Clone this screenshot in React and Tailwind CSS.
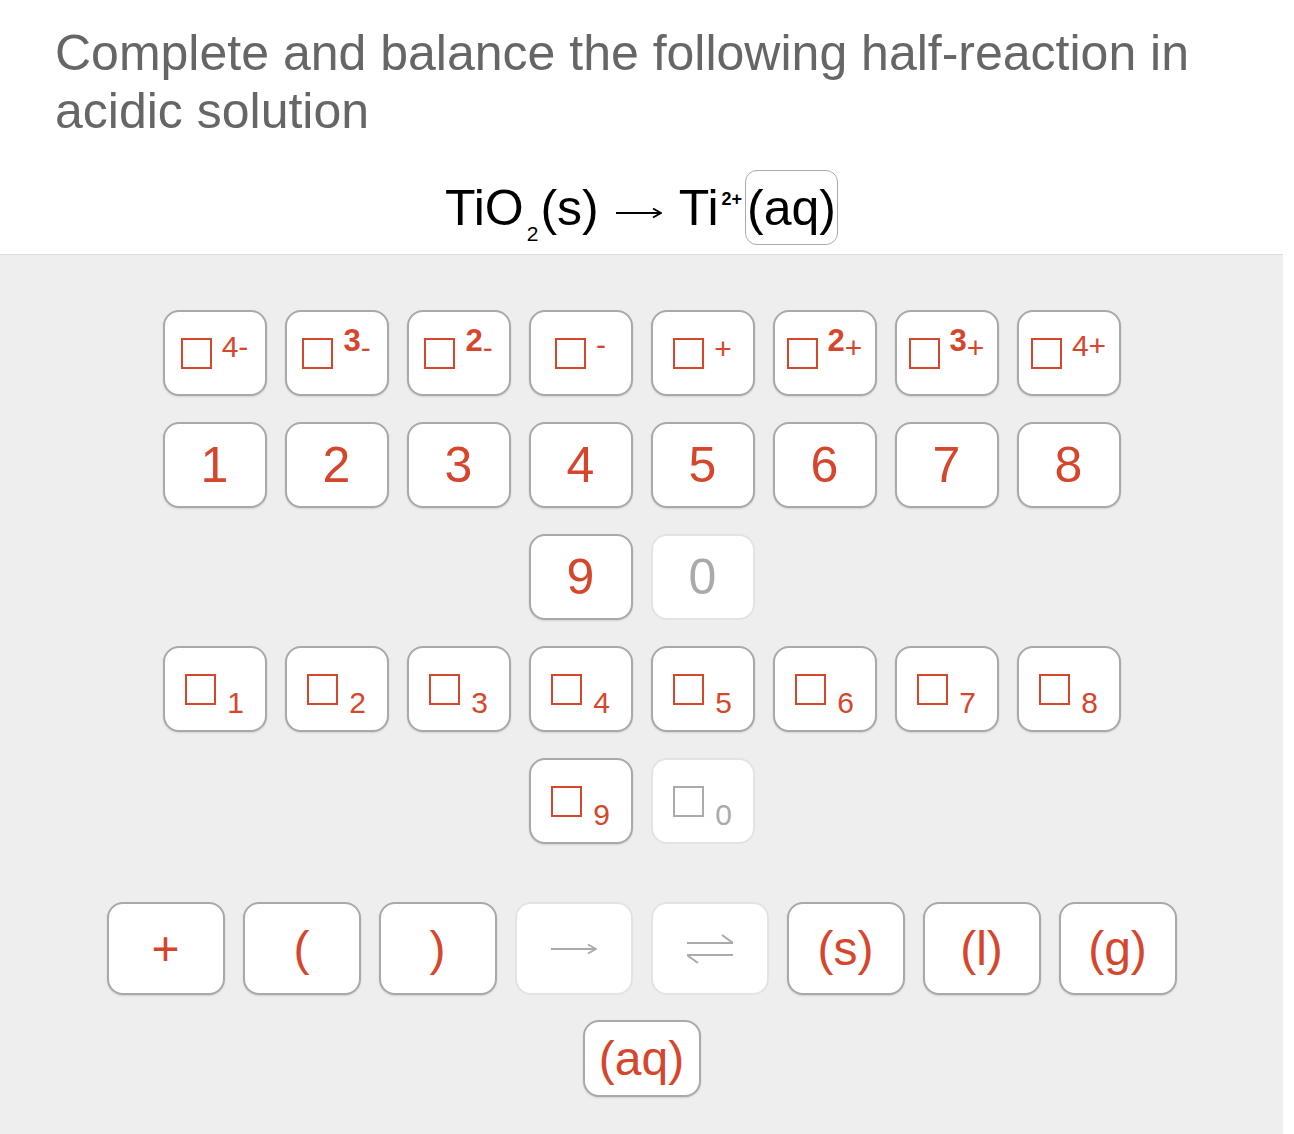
import React from 'react';

const FONT = "font-['Liberation_Sans',Arial,sans-serif]";

function Arrow({ color = '#000', w = 46 }) {
  return (
    <svg width={w} height="16" viewBox="0 0 46 16" fill="none">
      <path d="M0 8H44M37 3.5L45 8L37 12.5" stroke={color} strokeWidth="2" />
    </svg>
  );
}

function Harpoons() {
  return (
    <svg width="46" height="30" viewBox="0 0 46 30" fill="none">
      <path d="M0 9H46L35 1" stroke="#aaaaaa" strokeWidth="2" />
      <path d="M46 21H0L11 29" stroke="#aaaaaa" strokeWidth="2" />
    </svg>
  );
}

function Box({ disabled }) {
  return (
    <span className={disabled ? 'block w-[31px] h-[31px] border-2 border-[#aaaaaa]' : 'block w-[31px] h-[31px] border-2 border-[#d5472d]'} />
  );
}

function Key({ children, disabled, className = '' }) {
  const base = 'flex items-center justify-center bg-white rounded-[16px] ' + className;
  const tone = disabled
    ? ' border-2 border-[#e3e3e3] text-[#aaaaaa]'
    : ' border-2 border-[#a9a9a9] text-[#d5472d] shadow-[0_1px_2px_rgba(0,0,0,0.12)]';
  return <button className={base + tone}>{children}</button>;
}

// superscript charge keys
const CHARGES = [
  { bold: null, text: '4-', mt: 'mt-[-6px]' },
  { bold: '3', text: '-', mt: 'mt-[-13px]' },
  { bold: '2', text: '-', mt: 'mt-[-13px]' },
  { bold: null, text: '-', mt: 'mt-[-8px]' },
  { bold: null, text: '+', mt: 'mt-[-4px]' },
  { bold: '2', text: '+', mt: 'mt-[-13px]' },
  { bold: '3', text: '+', mt: 'mt-[-13px]' },
  { bold: null, text: '4+', mt: 'mt-[-7px]' },
];

function ChargeKey({ c }) {
  return (
    <Key className="h-[86px]">
      <span className="flex items-start h-[31px] gap-[10px]">
        <Box />
        <span className={'flex items-baseline leading-none text-[30px] ' + c.mt}>
          {c.bold && <span className="font-bold text-[31px]">{c.bold}</span>}
          <span className={c.bold ? 'relative top-[7px]' : ''}>{c.text}</span>
        </span>
      </span>
    </Key>
  );
}

function SubKey({ n, disabled, className = '' }) {
  return (
    <Key disabled={disabled} className={'h-[86px] ' + className}>
      <span className="flex items-start h-[31px] gap-[11px]">
        <Box disabled={disabled} />
        <span className="leading-none text-[30px] mt-[14px]">{n}</span>
      </span>
    </Key>
  );
}

export default function App() {
  return (
    <div className={'w-[1283px] min-h-[1134px] bg-[#eeeeee] ' + FONT}>
      {/* Header */}
      <header className="bg-white border-b border-[#dddddd] pt-[25px] pb-[9px]">
        <h1 className="px-[55px] text-[50px] leading-[57.5px] text-[#666666]">
          Complete and balance the following half-reaction in acidic solution
        </h1>
        <div className="mt-[30px] flex justify-center items-baseline text-[50px] leading-none text-black">
          <span>TiO</span>
          <span className="relative top-[16px] text-[21px] ml-[3px] mr-[2px]">2</span>
          <span>(s)</span>
          <span className="mx-[17px] relative top-[-4px] inline-block"><Arrow /></span>
          <span>Ti</span>
          <span className="relative top-[-20px] text-[18px] font-bold ml-[3px] mr-[3px]">2+</span>
          <span className="inline-flex h-[75px] pt-[12px] px-[1px] border-[1.5px] border-[#aaaaaa] rounded-[12px]">(aq)</span>
        </div>
      </header>

      {/* Keypad */}
      <div className="pt-[55px] flex justify-center">
        <div className="grid grid-cols-[repeat(8,104px)] gap-x-[18px] gap-y-[26px]">
          {CHARGES.map((c, i) => <ChargeKey key={i} c={c} />)}
          {[1, 2, 3, 4, 5, 6, 7, 8].map(n => (
            <Key key={n} className="h-[86px] text-[50px] leading-none">{n}</Key>
          ))}
          <Key className="h-[86px] text-[50px] leading-none col-start-4">9</Key>
          <Key disabled className="h-[86px] text-[50px] leading-none">0</Key>
          {[1, 2, 3, 4, 5, 6, 7, 8].map(n => (
            <SubKey key={n} n={n} className={n === 1 ? 'col-start-1' : ''} />
          ))}
          <SubKey n={9} className="col-start-4" />
          <SubKey n={0} disabled />
        </div>
      </div>

      {/* Symbols */}
      <div className="mt-[58px] flex justify-center gap-[18px]">
        <Key className="w-[118px] h-[93px] text-[48px] leading-none">+</Key>
        <Key className="w-[118px] h-[93px] text-[48px] leading-none">(</Key>
        <Key className="w-[118px] h-[93px] text-[48px] leading-none">)</Key>
        <Key disabled className="w-[118px] h-[93px]"><Arrow color="#aaaaaa" w={46} /></Key>
        <Key disabled className="w-[118px] h-[93px]"><Harpoons /></Key>
        <Key className="w-[118px] h-[93px] text-[48px] leading-none">(s)</Key>
        <Key className="w-[118px] h-[93px] text-[48px] leading-none">(l)</Key>
        <Key className="w-[118px] h-[93px] text-[48px] leading-none">(g)</Key>
      </div>
      <div className="mt-[25px] flex justify-center pb-[37px]">
        <Key className="w-[118px] h-[77px] text-[48px] leading-none">(aq)</Key>
      </div>
    </div>
  );
}
